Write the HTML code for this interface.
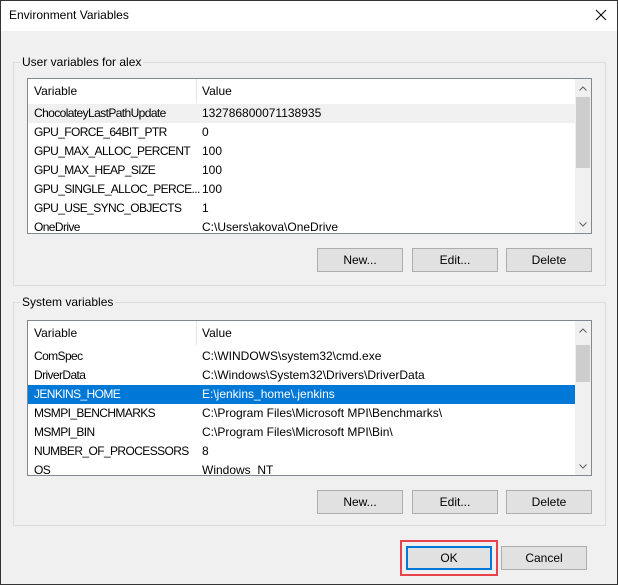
<!DOCTYPE html>
<html><head><style>
*{margin:0;padding:0;box-sizing:border-box}
body{width:618px;height:585px;position:relative;background:#f0f0f0;font-family:"Liberation Sans",sans-serif;font-size:12px;color:#000;overflow:hidden}
.abs{position:absolute}
.win{position:absolute;left:0;top:0;width:618px;height:585px;border:1px solid #333}
.title{left:1px;top:1px;width:616px;height:30px;background:#fff}
.grp{border:1px solid #dcdcdc}
.lbl{background:#f0f0f0;padding:0 2px;line-height:14px}
.list{background:#fff;border:1px solid #828790;overflow:hidden}
.row{position:absolute;left:0;height:19px;line-height:19px;white-space:nowrap}
.row span{position:absolute}
.c1{left:6px;letter-spacing:-0.6px}
.c2{left:174px}
.hdr{position:absolute;left:0;top:0;height:24px;line-height:24px;width:100%}
.hsep{position:absolute;left:168px;top:0;width:1px;height:24px;background:#e5e5e5}
.sb{position:absolute;right:0;top:0;width:16px;height:100%;background:#f0f0f0}
.thumb{position:absolute;left:1px;width:14px;background:#cdcdcd}
.arr{position:absolute;left:4px}
.btn{position:absolute;width:86px;height:24px;background:#e1e1e1;border:1px solid #adadad;text-align:center;line-height:22px}
</style></head><body>
<div class="win"></div>
<div class="abs title"></div>
<div class="abs" style="left:9px;top:8px;line-height:15px">Environment Variables</div>
<svg class="abs" style="left:595px;top:9px" width="12" height="12"><path d="M1 1L11 11M11 1L1 11" stroke="#000" stroke-width="1"/></svg>

<div class="abs grp" style="left:13px;top:62px;width:593px;height:224px"></div>
<div class="abs lbl" style="left:20px;top:55px">User variables for alex</div>
<div class="abs list" style="left:27px;top:78px;width:565px;height:156px">
 <div class="hdr"><span class="abs" style="left:6px">Variable</span><span class="abs" style="left:174px">Value</span><div class="hsep"></div></div>
 <div class="row" style="top:25px;width:547px;background:#f0f0f0"><span class="c1">ChocolateyLastPathUpdate</span><span class="c2">132786800071138935</span></div>
 <div class="row" style="top:44px"><span class="c1">GPU_FORCE_64BIT_PTR</span><span class="c2">0</span></div>
 <div class="row" style="top:63px"><span class="c1">GPU_MAX_ALLOC_PERCENT</span><span class="c2">100</span></div>
 <div class="row" style="top:82px"><span class="c1">GPU_MAX_HEAP_SIZE</span><span class="c2">100</span></div>
 <div class="row" style="top:101px"><span class="c1">GPU_SINGLE_ALLOC_PERCE...</span><span class="c2">100</span></div>
 <div class="row" style="top:120px"><span class="c1">GPU_USE_SYNC_OBJECTS</span><span class="c2">1</span></div>
 <div class="row" style="top:139px"><span class="c1">OneDrive</span><span class="c2">C:\Users\akova\OneDrive</span></div>
 <div class="sb"><svg class="arr" style="top:7px" width="8" height="5"><path d="M0.5 4.5L4 1L7.5 4.5" stroke="#606060" fill="none"/></svg><div class="thumb" style="top:18px;height:71px"></div><svg class="arr" style="top:143px" width="8" height="5"><path d="M0.5 0.5L4 4L7.5 0.5" stroke="#606060" fill="none"/></svg></div>
</div>
<div class="btn" style="left:317px;top:248px">New...</div>
<div class="btn" style="left:412px;top:248px">Edit...</div>
<div class="btn" style="left:506px;top:248px">Delete</div>

<div class="abs grp" style="left:13px;top:302px;width:593px;height:224px"></div>
<div class="abs lbl" style="left:20px;top:295px">System variables</div>
<div class="abs list" style="left:27px;top:320px;width:565px;height:156px">
 <div class="hdr"><span class="abs" style="left:6px">Variable</span><span class="abs" style="left:174px">Value</span><div class="hsep"></div></div>
 <div class="row" style="top:26px"><span class="c1">ComSpec</span><span class="c2">C:\WINDOWS\system32\cmd.exe</span></div>
 <div class="row" style="top:45px"><span class="c1">DriverData</span><span class="c2">C:\Windows\System32\Drivers\DriverData</span></div>
 <div class="row" style="top:64px;width:547px;background:#0078d7;color:#fff"><span class="c1">JENKINS_HOME</span><span class="c2">E:\jenkins_home\.jenkins</span></div>
 <div class="row" style="top:83px"><span class="c1">MSMPI_BENCHMARKS</span><span class="c2">C:\Program Files\Microsoft MPI\Benchmarks\</span></div>
 <div class="row" style="top:102px"><span class="c1">MSMPI_BIN</span><span class="c2">C:\Program Files\Microsoft MPI\Bin\</span></div>
 <div class="row" style="top:121px"><span class="c1">NUMBER_OF_PROCESSORS</span><span class="c2">8</span></div>
 <div class="row" style="top:140px"><span class="c1">OS</span><span class="c2">Windows_NT</span></div>
 <div class="sb"><svg class="arr" style="top:7px" width="8" height="5"><path d="M0.5 4.5L4 1L7.5 4.5" stroke="#606060" fill="none"/></svg><div class="thumb" style="top:24px;height:37px"></div><svg class="arr" style="top:143px" width="8" height="5"><path d="M0.5 0.5L4 4L7.5 0.5" stroke="#606060" fill="none"/></svg></div>
</div>
<div class="btn" style="left:317px;top:490px">New...</div>
<div class="btn" style="left:412px;top:490px">Edit...</div>
<div class="btn" style="left:506px;top:490px">Delete</div>

<div class="abs" style="left:400px;top:540px;width:98px;height:36px;border:2px solid #e8434a"></div>
<div class="btn" style="left:406px;top:546px;border:2px solid #0078d7;line-height:20px">OK</div>
<div class="btn" style="left:501px;top:546px">Cancel</div>
</body></html>
